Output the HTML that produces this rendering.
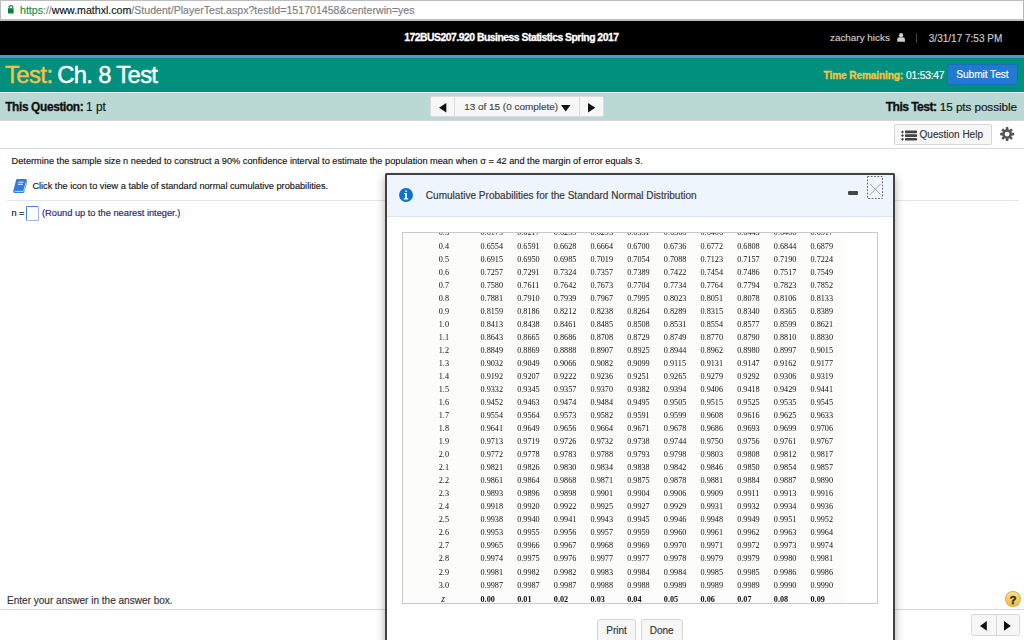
<!DOCTYPE html>
<html><head><meta charset="utf-8">
<style>
*{margin:0;padding:0;box-sizing:border-box}
html,body{width:1024px;height:640px;overflow:hidden;background:#fff;font-family:"Liberation Sans",sans-serif;position:relative}
.a{position:absolute;white-space:nowrap}
svg{position:absolute;overflow:visible}
#url{left:0;top:0;width:1024px;height:21px;background:#fff;border-top:1px solid #bdbdbd;border-left:1px solid #bdbdbd;border-right:1.5px solid #b5b5b5;border-bottom:2px solid #bdbdbd}
#black{left:0;top:21px;width:1024px;height:34px;background:#000}
#blue{left:0;top:55px;width:1024px;height:3px;background:#459fc9}
#teal{left:0;top:58px;width:1024px;height:33.5px;background:#01907e}
#wline{left:0;top:91.5px;width:1024px;height:1.5px;background:#f2f7f7}
#lteal{left:0;top:93px;width:1024px;height:27px;background:#bad9d5}
#gline{left:0;top:120px;width:1024px;height:1.2px;background:#d3d6e0}
#sep{left:916px;top:33px;width:1px;height:10px;background:#3b4746}
#submit{left:947px;top:64px;width:71px;height:21px;background:#1f7ad0;border-radius:2px;border:1px solid #1a6cbc}
#nav{left:430px;top:96px;width:174px;height:21px;background:#f7f7f7;border-radius:2px;border:1px solid #dcdcdc}
#nav i{position:absolute;top:0;width:1px;height:19px;background:#dcdcdc}
#line1{left:0;top:148px;width:1024px;height:1px;background:#d6dce6}
#qhelp{left:894px;top:124px;width:98px;height:21px;background:#f7f7f7;border:1px solid #d6d6d6;border-radius:2px}
#line2{left:7px;top:200px;width:1012px;height:1px;background:#e1e5ec}
#ibox{left:26px;top:206px;width:12.8px;height:14.6px;border:1px solid #4a80d6;border-right-color:#9dbbe8;border-bottom-color:#9dbbe8;border-radius:1.5px;background:#fff}
#line3{left:0;top:609px;width:1024px;height:1px;background:#d3dae6}
#help{left:1005.4px;top:591.3px;width:15.6px;height:16px;border-radius:50%;background:linear-gradient(#fbe08c,#f2bb3a);border:0.8px solid #d8b050}
#bnav{left:971px;top:614px;width:49px;height:21.5px;background:#f7f7f7;border:1px solid #d8d8d8;border-radius:2.5px}
#bnav i{position:absolute;left:24px;top:0;width:1px;height:19.5px;background:#d8d8d8}
/* text */
.t{position:absolute;white-space:nowrap;line-height:20px}
#t_title_y,#t_title_w{-webkit-text-stroke:0.45px currentColor}
#t_help{-webkit-text-stroke:0.35px currentColor}
.t{-webkit-text-stroke:0.15px currentColor}
#t_time_b,#t_course,#t_tq_b,#t_tt_b{-webkit-text-stroke:0.3px currentColor}
/* dialog */
#dlg{left:385px;top:173px;width:510px;height:490px;border:2px solid #424242;border-radius:1.5px;background:#fff;box-shadow:0 4px 10px rgba(0,0,0,.33)}
#dhead{left:0;top:0;width:506px;height:41.5px;background:#eff5fc;border-bottom:1px solid #d7e5f3}
#minus{left:461.1px;top:16.25px;width:10px;height:3.75px;background:#454545;border-radius:1px}
#close{left:482px;top:3px;width:16.5px;height:23px;border:1px dashed #666}
#tbox{left:15px;top:57px;width:476px;height:372px;border:1px solid #c9c9c9;background:#fff;overflow:hidden}
#timg{left:0;top:0;width:443px;height:372px;background:#fcfcfa}
.r{position:absolute;left:0;height:10px;line-height:10px;width:470px;font-family:"Liberation Serif",serif;font-size:8.2px;color:#111;white-space:nowrap}
.r b{position:absolute;font-weight:normal;top:0}
.r i{position:absolute;font-style:normal;top:0}
.zr b{font-style:italic;font-size:9.6px;top:-0.8px !important}
.zr i{font-weight:bold}
#print{left:210.4px;top:444px;width:39px;height:30px;background:#f6f6f6;border:1px solid #d6d6d6;border-radius:3px}
#done{left:254px;top:444px;width:42px;height:30px;background:#f6f6f6;border:1px solid #d6d6d6;border-radius:3px}
#t_url{left:20.00px;top:0.20px;font-size:10.600px;font-weight:400;color:#7d7d7d;letter-spacing:0.000px}
#t_course{left:404.20px;top:28.20px;font-size:10.400px;font-weight:700;color:#fff;letter-spacing:-0.500px}
#t_user{left:830.00px;top:28.00px;font-size:9.900px;font-weight:400;color:#cdcdcd;letter-spacing:0.000px}
#t_date{left:928.80px;top:29.00px;font-size:10.032px;font-weight:400;color:#cdcdcd;letter-spacing:0.000px}
#t_title_y{left:4.90px;top:64.50px;font-size:23.800px;font-weight:400;color:#f6c244;letter-spacing:-0.525px}
#t_title_w{left:57.20px;top:64.50px;font-size:23.800px;font-weight:400;color:#fff;letter-spacing:-0.656px}
#t_time_b{left:823.60px;top:66.20px;font-size:10.200px;font-weight:700;color:#f6c53c;letter-spacing:-0.160px}
#t_time_r{left:906.00px;top:66.00px;font-size:10.300px;font-weight:400;color:#fff;letter-spacing:-0.214px}
#t_submit{left:956.20px;top:64.80px;font-size:10.200px;font-weight:400;color:#fff;letter-spacing:-0.060px}
#t_tq_b{left:5.20px;top:97.20px;font-size:11.900px;font-weight:700;color:#111;letter-spacing:-0.362px}
#t_tq_r{left:86.10px;top:97.20px;font-size:11.900px;font-weight:400;color:#111;letter-spacing:0.000px}
#t_nav{left:464.20px;top:97.40px;font-size:9.946px;font-weight:400;color:#444;letter-spacing:0.000px}
#t_tt_b{left:885.70px;top:96.60px;font-size:12.200px;font-weight:700;color:#111;letter-spacing:-0.600px}
#t_tt_r{left:939.80px;top:96.60px;font-size:11.800px;font-weight:400;color:#111;letter-spacing:-0.107px}
#t_qh{left:919.60px;top:124.80px;font-size:10.012px;font-weight:400;color:#333;letter-spacing:0.000px}
#t_q{left:11.60px;top:151.40px;font-size:9.217px;font-weight:400;color:#151515;letter-spacing:0.000px}
#t_c{left:32.40px;top:175.80px;font-size:9.200px;font-weight:400;color:#151515;letter-spacing:0.000px}
#t_n{left:11.40px;top:202.60px;font-size:9.250px;font-weight:400;color:#151515;letter-spacing:0.000px}
#t_round{left:42.00px;top:202.90px;font-size:9.250px;font-weight:400;color:#1f1a7c;letter-spacing:0.000px}
#t_dtitle{left:425.80px;top:186.20px;font-size:10.056px;font-weight:400;color:#333;letter-spacing:0.000px}
#t_enter{left:7.00px;top:591.20px;font-size:10.048px;font-weight:400;color:#333;letter-spacing:0.000px}
#t_print{left:606.30px;top:621.40px;font-size:10.000px;font-weight:400;color:#333;letter-spacing:0.000px}
#t_done{left:649.70px;top:621.40px;font-size:10.000px;font-weight:400;color:#333;letter-spacing:0.000px}
#t_help{left:1009.50px;top:590.00px;font-size:11.500px;font-weight:700;color:#2b2b2b;letter-spacing:0.000px}
</style></head><body>
<div id="url" class="a"></div>
<svg style="left:8px;top:5px" width="6" height="9" viewBox="0 0 6 9"><path d="M1.2,3.3 V2.2 Q1.2,0.6 3,0.6 Q4.8,0.6 4.8,2.2 V3.3" fill="none" stroke="#0c7f39" stroke-width="1.1"/><rect x="0" y="3.2" width="5.6" height="5.3" fill="#0c7f39"/></svg>
<div id="t_url" class="t"><span style="color:#1b8a3c">https</span><span style="color:#8a8a8a">://</span><span style="color:#111">www.mathxl.com</span>/Student/PlayerTest.aspx?testId=151701458&amp;centerwin=yes</div>
<div id="black" class="a"></div>
<div id="blue" class="a"></div>
<div id="teal" class="a"></div>
<div id="wline" class="a"></div>
<div id="lteal" class="a"></div>
<div id="gline" class="a"></div>
<div id="t_course" class="t">172BUS207.920 Business Statistics Spring 2017</div>
<div id="t_user" class="t">zachary hicks</div>
<svg style="left:896.8px;top:33px" width="8.2" height="9" viewBox="0 0 8.2 9"><circle cx="4.1" cy="2.2" r="2.1" fill="#cfcfcf"/><path d="M0.2,8.8 V6.6 Q0.2,4.3 2.5,4.3 H5.7 Q8,4.3 8,6.6 V8.8 Z" fill="#cfcfcf"/></svg>
<div id="sep" class="a"></div>
<div id="t_date" class="t">3/31/17 7:53 PM</div>
<div id="t_title_y" class="t">Test:</div><div id="t_title_w" class="t">Ch. 8 Test</div>
<div id="t_time_b" class="t">Time Remaining:</div><div id="t_time_r" class="t">01:53:47</div>
<div id="submit" class="a"></div>
<div id="t_submit" class="t">Submit Test</div>
<div id="t_tq_b" class="t">This Question:</div><div id="t_tq_r" class="t">1 pt</div>
<div id="nav" class="a"><i style="left:23px"></i><i style="left:148px"></i></div>
<svg style="left:439px;top:102.8px" width="8" height="10" viewBox="0 0 8 10"><path d="M7.3,0 V9.4 L0,4.7 Z" fill="#111"/></svg>
<div id="t_nav" class="t">13 of 15 (0 complete)</div>
<svg style="left:561px;top:104.6px" width="10" height="7" viewBox="0 0 10 7"><path d="M0,0 H9.5 L4.75,6.4 Z" fill="#111"/></svg>
<svg style="left:587.6px;top:102.8px" width="8" height="10" viewBox="0 0 8 10"><path d="M0,0 V9.4 L7.3,4.7 Z" fill="#111"/></svg>
<div id="t_tt_b" class="t">This Test:</div><div id="t_tt_r" class="t">15 pts possible</div>
<div id="line1" class="a"></div>
<div id="qhelp" class="a"></div>
<svg style="left:901px;top:129.5px" width="17" height="11" viewBox="0 0 17 11">
 <g fill="#444"><rect x="4" y="0.6" width="12" height="2.6" rx="0.6"/><rect x="4" y="4.3" width="12" height="2.6" rx="0.6"/><rect x="4" y="8" width="12" height="2.6" rx="0.6"/>
 <path d="M0,1.9 L1.5,0.4 L3,1.9 L1.5,3.4Z M0,5.6 L1.5,4.1 L3,5.6 L1.5,7.1Z M0,9.3 L1.5,7.8 L3,9.3 L1.5,10.8Z"/></g></svg>
<div id="t_qh" class="t">Question Help</div>
<svg style="left:1000px;top:126.5px" width="14.2" height="14.2" viewBox="-7.1 -7.1 14.2 14.2">
 <g fill="#565656">
 <circle r="4.9"/>
 <rect x="-1.3" y="-7" width="2.6" height="4" rx="0.6"/>
 <rect x="-1.3" y="-7" width="2.6" height="4" rx="0.6" transform="rotate(45)"/>
 <rect x="-1.3" y="-7" width="2.6" height="4" rx="0.6" transform="rotate(90)"/>
 <rect x="-1.3" y="-7" width="2.6" height="4" rx="0.6" transform="rotate(135)"/>
 <rect x="-1.3" y="-7" width="2.6" height="4" rx="0.6" transform="rotate(180)"/>
 <rect x="-1.3" y="-7" width="2.6" height="4" rx="0.6" transform="rotate(225)"/>
 <rect x="-1.3" y="-7" width="2.6" height="4" rx="0.6" transform="rotate(270)"/>
 <rect x="-1.3" y="-7" width="2.6" height="4" rx="0.6" transform="rotate(315)"/>
 </g><circle r="2.4" fill="#fff"/></svg>
<div id="t_q" class="t">Determine the sample size n needed to construct a 90% confidence interval to estimate the population mean when &sigma; = 42 and the margin of error equals 3.</div>
<svg style="left:13px;top:179px" width="14.5" height="14" viewBox="0 0 14.5 14">
 <path d="M4.3,0 H12.6 Q14,0 13.6,1.4 L13.9,2.2 Q14.3,3 14,4 L11.3,12.8 Q10.9,14 9.7,14 H1.6 Q-0.2,14 0.2,12.2 L3,1.2 Q3.3,0 4.3,0 Z" fill="#2c7fe0"/>
 <path d="M5.3,3.2 H10.6 M4.8,5.3 H9.9" stroke="#fff" stroke-width="0.9"/>
 <path d="M1.7,12.4 H10 Q10.6,12.4 10.9,11.5 L13.2,3" stroke="#fff" stroke-width="0.7" fill="none"/>
</svg>
<div id="t_c" class="t">Click the icon to view a table of standard normal cumulative probabilities.</div>
<div id="line2" class="a"></div>
<div id="t_n" class="t">n =</div>
<div id="ibox" class="a"></div>
<div id="t_round" class="t">(Round up to the nearest integer.)</div>
<div id="t_enter" class="t">Enter your answer in the answer box.</div>
<div id="line3" class="a"></div>
<div id="help" class="a"></div>
<div id="t_help" class="t">?</div>
<div id="bnav" class="a"><i></i></div>
<svg style="left:980px;top:620.8px" width="7" height="10" viewBox="0 0 7 10"><path d="M6.8,0 V9.8 L0,4.9 Z" fill="#111"/></svg>
<svg style="left:1003.8px;top:620.8px" width="7" height="10" viewBox="0 0 7 10"><path d="M0,0 V9.8 L6.8,4.9 Z" fill="#111"/></svg>
<div id="dlg" class="a">
 <div id="dhead" class="a"></div>
 <svg style="left:12.3px;top:13.3px" width="14" height="14" viewBox="0 0 14 14"><circle cx="7" cy="7" r="6.95" fill="#0c73c9"/>
  <rect x="6" y="2.4" width="2.1" height="1.4" rx="0.5" fill="#fff"/>
  <path d="M5.1,5 H7.9 V10.2 H9.2 V11.5 H4.8 V10.2 H6.1 V6.1 H5.1 Z" fill="#fff"/></svg>
 <div id="minus" class="a"></div>
 <svg style="left:479px;top:0px" width="18" height="24" viewBox="0 0 18 24"><rect x="1.5" y="1.5" width="15" height="22" fill="none" stroke="#6a6a6a" stroke-width="1" stroke-dasharray="1.8,1.5"/><path d="M4,9 L14.6,19.6 M14.6,9 L4,19.6" stroke="#8a8a8a" stroke-width="0.8"/></svg>
 <div id="tbox" class="a">
  <div id="timg" class="a"></div>
  <div id="rows" class="a" style="left:0;top:0;width:474px;height:370px;will-change:transform">
<div class="r" style="top:-4.54px;left:35.75px"><b>0.3</b><i style="left:41.75px">0.6179</i><i style="left:78.42px">0.6217</i><i style="left:115.09px">0.6255</i><i style="left:151.76px">0.6293</i><i style="left:188.43px">0.6331</i><i style="left:225.10px">0.6368</i><i style="left:261.77px">0.6406</i><i style="left:298.44px">0.6443</i><i style="left:335.11px">0.6480</i><i style="left:371.78px">0.6517</i></div>
<div class="r" style="top:8.50px;left:35.75px"><b>0.4</b><i style="left:41.75px">0.6554</i><i style="left:78.42px">0.6591</i><i style="left:115.09px">0.6628</i><i style="left:151.76px">0.6664</i><i style="left:188.43px">0.6700</i><i style="left:225.10px">0.6736</i><i style="left:261.77px">0.6772</i><i style="left:298.44px">0.6808</i><i style="left:335.11px">0.6844</i><i style="left:371.78px">0.6879</i></div>
<div class="r" style="top:21.54px;left:35.75px"><b>0.5</b><i style="left:41.75px">0.6915</i><i style="left:78.42px">0.6950</i><i style="left:115.09px">0.6985</i><i style="left:151.76px">0.7019</i><i style="left:188.43px">0.7054</i><i style="left:225.10px">0.7088</i><i style="left:261.77px">0.7123</i><i style="left:298.44px">0.7157</i><i style="left:335.11px">0.7190</i><i style="left:371.78px">0.7224</i></div>
<div class="r" style="top:34.58px;left:35.75px"><b>0.6</b><i style="left:41.75px">0.7257</i><i style="left:78.42px">0.7291</i><i style="left:115.09px">0.7324</i><i style="left:151.76px">0.7357</i><i style="left:188.43px">0.7389</i><i style="left:225.10px">0.7422</i><i style="left:261.77px">0.7454</i><i style="left:298.44px">0.7486</i><i style="left:335.11px">0.7517</i><i style="left:371.78px">0.7549</i></div>
<div class="r" style="top:47.62px;left:35.75px"><b>0.7</b><i style="left:41.75px">0.7580</i><i style="left:78.42px">0.7611</i><i style="left:115.09px">0.7642</i><i style="left:151.76px">0.7673</i><i style="left:188.43px">0.7704</i><i style="left:225.10px">0.7734</i><i style="left:261.77px">0.7764</i><i style="left:298.44px">0.7794</i><i style="left:335.11px">0.7823</i><i style="left:371.78px">0.7852</i></div>
<div class="r" style="top:60.66px;left:35.75px"><b>0.8</b><i style="left:41.75px">0.7881</i><i style="left:78.42px">0.7910</i><i style="left:115.09px">0.7939</i><i style="left:151.76px">0.7967</i><i style="left:188.43px">0.7995</i><i style="left:225.10px">0.8023</i><i style="left:261.77px">0.8051</i><i style="left:298.44px">0.8078</i><i style="left:335.11px">0.8106</i><i style="left:371.78px">0.8133</i></div>
<div class="r" style="top:73.70px;left:35.75px"><b>0.9</b><i style="left:41.75px">0.8159</i><i style="left:78.42px">0.8186</i><i style="left:115.09px">0.8212</i><i style="left:151.76px">0.8238</i><i style="left:188.43px">0.8264</i><i style="left:225.10px">0.8289</i><i style="left:261.77px">0.8315</i><i style="left:298.44px">0.8340</i><i style="left:335.11px">0.8365</i><i style="left:371.78px">0.8389</i></div>
<div class="r" style="top:86.74px;left:35.75px"><b>1.0</b><i style="left:41.75px">0.8413</i><i style="left:78.42px">0.8438</i><i style="left:115.09px">0.8461</i><i style="left:151.76px">0.8485</i><i style="left:188.43px">0.8508</i><i style="left:225.10px">0.8531</i><i style="left:261.77px">0.8554</i><i style="left:298.44px">0.8577</i><i style="left:335.11px">0.8599</i><i style="left:371.78px">0.8621</i></div>
<div class="r" style="top:99.78px;left:35.75px"><b>1.1</b><i style="left:41.75px">0.8643</i><i style="left:78.42px">0.8665</i><i style="left:115.09px">0.8686</i><i style="left:151.76px">0.8708</i><i style="left:188.43px">0.8729</i><i style="left:225.10px">0.8749</i><i style="left:261.77px">0.8770</i><i style="left:298.44px">0.8790</i><i style="left:335.11px">0.8810</i><i style="left:371.78px">0.8830</i></div>
<div class="r" style="top:112.82px;left:35.75px"><b>1.2</b><i style="left:41.75px">0.8849</i><i style="left:78.42px">0.8869</i><i style="left:115.09px">0.8888</i><i style="left:151.76px">0.8907</i><i style="left:188.43px">0.8925</i><i style="left:225.10px">0.8944</i><i style="left:261.77px">0.8962</i><i style="left:298.44px">0.8980</i><i style="left:335.11px">0.8997</i><i style="left:371.78px">0.9015</i></div>
<div class="r" style="top:125.86px;left:35.75px"><b>1.3</b><i style="left:41.75px">0.9032</i><i style="left:78.42px">0.9049</i><i style="left:115.09px">0.9066</i><i style="left:151.76px">0.9082</i><i style="left:188.43px">0.9099</i><i style="left:225.10px">0.9115</i><i style="left:261.77px">0.9131</i><i style="left:298.44px">0.9147</i><i style="left:335.11px">0.9162</i><i style="left:371.78px">0.9177</i></div>
<div class="r" style="top:138.90px;left:35.75px"><b>1.4</b><i style="left:41.75px">0.9192</i><i style="left:78.42px">0.9207</i><i style="left:115.09px">0.9222</i><i style="left:151.76px">0.9236</i><i style="left:188.43px">0.9251</i><i style="left:225.10px">0.9265</i><i style="left:261.77px">0.9279</i><i style="left:298.44px">0.9292</i><i style="left:335.11px">0.9306</i><i style="left:371.78px">0.9319</i></div>
<div class="r" style="top:151.94px;left:35.75px"><b>1.5</b><i style="left:41.75px">0.9332</i><i style="left:78.42px">0.9345</i><i style="left:115.09px">0.9357</i><i style="left:151.76px">0.9370</i><i style="left:188.43px">0.9382</i><i style="left:225.10px">0.9394</i><i style="left:261.77px">0.9406</i><i style="left:298.44px">0.9418</i><i style="left:335.11px">0.9429</i><i style="left:371.78px">0.9441</i></div>
<div class="r" style="top:164.98px;left:35.75px"><b>1.6</b><i style="left:41.75px">0.9452</i><i style="left:78.42px">0.9463</i><i style="left:115.09px">0.9474</i><i style="left:151.76px">0.9484</i><i style="left:188.43px">0.9495</i><i style="left:225.10px">0.9505</i><i style="left:261.77px">0.9515</i><i style="left:298.44px">0.9525</i><i style="left:335.11px">0.9535</i><i style="left:371.78px">0.9545</i></div>
<div class="r" style="top:178.02px;left:35.75px"><b>1.7</b><i style="left:41.75px">0.9554</i><i style="left:78.42px">0.9564</i><i style="left:115.09px">0.9573</i><i style="left:151.76px">0.9582</i><i style="left:188.43px">0.9591</i><i style="left:225.10px">0.9599</i><i style="left:261.77px">0.9608</i><i style="left:298.44px">0.9616</i><i style="left:335.11px">0.9625</i><i style="left:371.78px">0.9633</i></div>
<div class="r" style="top:191.06px;left:35.75px"><b>1.8</b><i style="left:41.75px">0.9641</i><i style="left:78.42px">0.9649</i><i style="left:115.09px">0.9656</i><i style="left:151.76px">0.9664</i><i style="left:188.43px">0.9671</i><i style="left:225.10px">0.9678</i><i style="left:261.77px">0.9686</i><i style="left:298.44px">0.9693</i><i style="left:335.11px">0.9699</i><i style="left:371.78px">0.9706</i></div>
<div class="r" style="top:204.10px;left:35.75px"><b>1.9</b><i style="left:41.75px">0.9713</i><i style="left:78.42px">0.9719</i><i style="left:115.09px">0.9726</i><i style="left:151.76px">0.9732</i><i style="left:188.43px">0.9738</i><i style="left:225.10px">0.9744</i><i style="left:261.77px">0.9750</i><i style="left:298.44px">0.9756</i><i style="left:335.11px">0.9761</i><i style="left:371.78px">0.9767</i></div>
<div class="r" style="top:217.14px;left:35.75px"><b>2.0</b><i style="left:41.75px">0.9772</i><i style="left:78.42px">0.9778</i><i style="left:115.09px">0.9783</i><i style="left:151.76px">0.9788</i><i style="left:188.43px">0.9793</i><i style="left:225.10px">0.9798</i><i style="left:261.77px">0.9803</i><i style="left:298.44px">0.9808</i><i style="left:335.11px">0.9812</i><i style="left:371.78px">0.9817</i></div>
<div class="r" style="top:230.18px;left:35.75px"><b>2.1</b><i style="left:41.75px">0.9821</i><i style="left:78.42px">0.9826</i><i style="left:115.09px">0.9830</i><i style="left:151.76px">0.9834</i><i style="left:188.43px">0.9838</i><i style="left:225.10px">0.9842</i><i style="left:261.77px">0.9846</i><i style="left:298.44px">0.9850</i><i style="left:335.11px">0.9854</i><i style="left:371.78px">0.9857</i></div>
<div class="r" style="top:243.22px;left:35.75px"><b>2.2</b><i style="left:41.75px">0.9861</i><i style="left:78.42px">0.9864</i><i style="left:115.09px">0.9868</i><i style="left:151.76px">0.9871</i><i style="left:188.43px">0.9875</i><i style="left:225.10px">0.9878</i><i style="left:261.77px">0.9881</i><i style="left:298.44px">0.9884</i><i style="left:335.11px">0.9887</i><i style="left:371.78px">0.9890</i></div>
<div class="r" style="top:256.26px;left:35.75px"><b>2.3</b><i style="left:41.75px">0.9893</i><i style="left:78.42px">0.9896</i><i style="left:115.09px">0.9898</i><i style="left:151.76px">0.9901</i><i style="left:188.43px">0.9904</i><i style="left:225.10px">0.9906</i><i style="left:261.77px">0.9909</i><i style="left:298.44px">0.9911</i><i style="left:335.11px">0.9913</i><i style="left:371.78px">0.9916</i></div>
<div class="r" style="top:269.30px;left:35.75px"><b>2.4</b><i style="left:41.75px">0.9918</i><i style="left:78.42px">0.9920</i><i style="left:115.09px">0.9922</i><i style="left:151.76px">0.9925</i><i style="left:188.43px">0.9927</i><i style="left:225.10px">0.9929</i><i style="left:261.77px">0.9931</i><i style="left:298.44px">0.9932</i><i style="left:335.11px">0.9934</i><i style="left:371.78px">0.9936</i></div>
<div class="r" style="top:282.34px;left:35.75px"><b>2.5</b><i style="left:41.75px">0.9938</i><i style="left:78.42px">0.9940</i><i style="left:115.09px">0.9941</i><i style="left:151.76px">0.9943</i><i style="left:188.43px">0.9945</i><i style="left:225.10px">0.9946</i><i style="left:261.77px">0.9948</i><i style="left:298.44px">0.9949</i><i style="left:335.11px">0.9951</i><i style="left:371.78px">0.9952</i></div>
<div class="r" style="top:295.38px;left:35.75px"><b>2.6</b><i style="left:41.75px">0.9953</i><i style="left:78.42px">0.9955</i><i style="left:115.09px">0.9956</i><i style="left:151.76px">0.9957</i><i style="left:188.43px">0.9959</i><i style="left:225.10px">0.9960</i><i style="left:261.77px">0.9961</i><i style="left:298.44px">0.9962</i><i style="left:335.11px">0.9963</i><i style="left:371.78px">0.9964</i></div>
<div class="r" style="top:308.42px;left:35.75px"><b>2.7</b><i style="left:41.75px">0.9965</i><i style="left:78.42px">0.9966</i><i style="left:115.09px">0.9967</i><i style="left:151.76px">0.9968</i><i style="left:188.43px">0.9969</i><i style="left:225.10px">0.9970</i><i style="left:261.77px">0.9971</i><i style="left:298.44px">0.9972</i><i style="left:335.11px">0.9973</i><i style="left:371.78px">0.9974</i></div>
<div class="r" style="top:321.46px;left:35.75px"><b>2.8</b><i style="left:41.75px">0.9974</i><i style="left:78.42px">0.9975</i><i style="left:115.09px">0.9976</i><i style="left:151.76px">0.9977</i><i style="left:188.43px">0.9977</i><i style="left:225.10px">0.9978</i><i style="left:261.77px">0.9979</i><i style="left:298.44px">0.9979</i><i style="left:335.11px">0.9980</i><i style="left:371.78px">0.9981</i></div>
<div class="r" style="top:334.50px;left:35.75px"><b>2.9</b><i style="left:41.75px">0.9981</i><i style="left:78.42px">0.9982</i><i style="left:115.09px">0.9982</i><i style="left:151.76px">0.9983</i><i style="left:188.43px">0.9984</i><i style="left:225.10px">0.9984</i><i style="left:261.77px">0.9985</i><i style="left:298.44px">0.9985</i><i style="left:335.11px">0.9986</i><i style="left:371.78px">0.9986</i></div>
<div class="r" style="top:347.54px;left:35.75px"><b>3.0</b><i style="left:41.75px">0.9987</i><i style="left:78.42px">0.9987</i><i style="left:115.09px">0.9987</i><i style="left:151.76px">0.9988</i><i style="left:188.43px">0.9988</i><i style="left:225.10px">0.9989</i><i style="left:261.77px">0.9989</i><i style="left:298.44px">0.9989</i><i style="left:335.11px">0.9990</i><i style="left:371.78px">0.9990</i></div>
<div class="r zr" style="top:361.50px;left:35.75px"><b style="left:2.5px">z</b><i style="left:41.75px">0.00</i><i style="left:78.42px">0.01</i><i style="left:115.09px">0.02</i><i style="left:151.76px">0.03</i><i style="left:188.43px">0.04</i><i style="left:225.10px">0.05</i><i style="left:261.77px">0.06</i><i style="left:298.44px">0.07</i><i style="left:335.11px">0.08</i><i style="left:371.78px">0.09</i></div>
  </div>
 </div>
 <div id="print" class="a"></div>
 <div id="done" class="a"></div>
</div>
<div id="t_dtitle" class="t">Cumulative Probabilities for the Standard Normal Distribution</div>
<div id="t_print" class="t">Print</div>
<div id="t_done" class="t">Done</div>
</body></html>
